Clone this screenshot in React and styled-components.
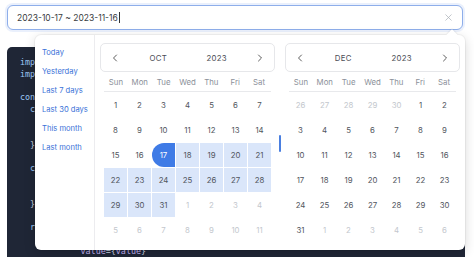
import React from 'react'
import styled, { createGlobalStyle } from 'styled-components'
import { ChevronLeft, ChevronRight, X } from 'lucide-react'

// STYLES //
const Global = createGlobalStyle`
  html, body {
    margin: 0;
    padding: 0;
    background: #fff;
    font-family: "Inter", "Liberation Sans", sans-serif;
  }
  * { box-sizing: border-box; }
`;
const Page = styled.div`
  position: relative;
  width: 474px;
  height: 257px;
  overflow: hidden;
  padding: 5px 0 0 7px;
`;
const Input = styled.div`
  display: flex;
  align-items: center;
  width: 456px;
  height: 25px;
  padding: 0 8px 0 9px;
  border: 1px solid #8eaeea;
  border-radius: 6px;
  box-shadow: 0 0 0 2px rgba(80, 130, 230, 0.12);
  font-size: 8.5px;
  color: #3a3d42;
  background: #fff;
`;
const InputText = styled.span`
  flex: 1;
  display: flex;
  align-items: center;
`;
const Caret = styled.span`
  width: 1px;
  height: 11px;
  background: #333;
  margin-left: 1px;
`;
const Clear = styled.span`
  display: flex;
  color: #a8adb5;
`;
const Code = styled.pre`
  margin: 17px 0 0 0;
  width: 458px;
  height: 220px;
  padding: 10px 0 0 13px;
  background: #1f2636;
  border-radius: 5px 5px 0 0;
  font-family: "DejaVu Sans Mono", "Liberation Mono", monospace;
  font-size: 8.4px;
  line-height: 11.8px;
  color: #c9d3e3;
  overflow: hidden;
`;
const Kw = styled.span`
  color: ${p => p.c || '#9cc6f5'};
`;
const Popup = styled.div`
  position: absolute;
  left: 35px;
  top: 35px;
  width: 430px;
  height: 215px;
  display: flex;
  background: #fff;
  border-radius: 6px;
  box-shadow: 0 3px 12px rgba(0, 0, 0, 0.16), 0 0 0 1px rgba(0, 0, 0, 0.04);
`;
const Arrow = styled.div`
  position: absolute;
  top: -4px;
  right: 9px;
  width: 8px;
  height: 8px;
  background: #fff;
  transform: rotate(45deg);
  box-shadow: -1px -1px 1px rgba(0, 0, 0, 0.06);
`;
const Sidebar = styled.div`
  width: 60px;
  padding: 8px 0 0 7px;
  border-right: 1px solid #ececef;
  display: flex;
  flex-direction: column;
`;
const Preset = styled.div`
  height: 19px;
  line-height: 19px;
  font-size: 7.6px;
  color: #3a72d8;
  white-space: nowrap;
`;
const Calendars = styled.div`
  position: relative;
  display: flex;
  gap: 10px;
  padding: 8px 5px 7px 5px;
`;
const RangeBar = styled.div`
  position: absolute;
  left: 184px;
  top: 100px;
  width: 2px;
  height: 17px;
  background: #4a7fe0;
  border-radius: 1px;
`;
const Calendar = styled.div`
  width: 175px;
  display: flex;
  flex-direction: column;
`;
const Header = styled.div`
  height: 29px;
  display: grid;
  grid-template-columns: 28px 1fr 1fr 28px;
  align-items: center;
  justify-items: center;
  border: 1px solid #e6e7ea;
  border-radius: 5px;
  font-size: 7.8px;
  color: #4a4e55;
  letter-spacing: 0.3px;
`;
const Nav = styled.span`
  display: flex;
  color: #333;
`;
const Body = styled.div`
  padding: 0 4px;
`;
const Weekdays = styled.div`
  display: grid;
  grid-template-columns: repeat(7, 1fr);
  height: 20px;
  align-items: center;
  justify-items: center;
  border-bottom: 1px solid #e8e9ec;
  font-size: 7.8px;
  color: #8b9099;
`;
const Days = styled.div`
  margin-top: 1px;
  display: grid;
  grid-template-columns: repeat(7, 1fr);
  grid-auto-rows: 24px;
  gap: 1px;
`;
const Day = styled.div`
  display: flex;
  align-items: center;
  justify-content: center;
  font-size: 7.8px;
  color: ${p => (p.$start ? '#fff' : p.$muted ? '#c3c7cd' : '#50555d')};
  background: ${p => (p.$start ? '#3f7be6' : p.$range ? '#dae6fa' : 'transparent')};
  border-radius: ${p => (p.$start ? '12px 0 0 12px' : '0')};
`;

// DATA //
const presets = ['Today', 'Yesterday', 'Last 7 days', 'Last 30 days', 'This month', 'Last month'];
const weekdays = ['Sun', 'Mon', 'Tue', 'Wed', 'Thu', 'Fri', 'Sat'];

const octDays = [
  ...Array.from({ length: 31 }, (_, i) => ({
    n: i + 1,
    range: i + 1 >= 17,
    start: i + 1 === 17,
  })),
  ...Array.from({ length: 11 }, (_, i) => ({ n: i + 1, muted: true })),
];
const decDays = [
  ...[26, 27, 28, 29, 30].map(n => ({ n, muted: true })),
  ...Array.from({ length: 31 }, (_, i) => ({ n: i + 1 })),
  ...Array.from({ length: 6 }, (_, i) => ({ n: i + 1, muted: true })),
];

const Month = ({ month, year, days }) => (
  <Calendar>
    <Header>
      <Nav><ChevronLeft size={12} strokeWidth={1.6} /></Nav>
      <span>{month}</span>
      <span>{year}</span>
      <Nav><ChevronRight size={12} strokeWidth={1.6} /></Nav>
    </Header>
    <Body>
      <Weekdays>
        {weekdays.map(w => <span key={w}>{w}</span>)}
      </Weekdays>
      <Days>
        {days.map((d, i) => (
          <Day key={i} $muted={d.muted} $range={d.range} $start={d.start}>{d.n}</Day>
        ))}
      </Days>
    </Body>
  </Calendar>
);

// COMPONENT //
const App = () => {
  return (
    <Page>
      <Global />
      <Input>
        <InputText>2023-10-17 ~ 2023-11-16<Caret /></InputText>
        <Clear><X size={11} strokeWidth={1.5} /></Clear>
      </Input>
      <Code>
        <Kw>import</Kw> React{'\n'}
        <Kw>import</Kw> {'{'}{'\n'}
        {'\n'}
        <Kw>const</Kw> App{'\n'}
        {'  '}<Kw>c</Kw>{'\n'}
        {'\n'}
        {'\n'}
        {'  '}{'}'}{'\n'}
        {'\n'}
        {'  '}<Kw>c</Kw>{'\n'}
        {'\n'}
        {'\n'}
        {'  '}{'}'}{'\n'}
        {'\n'}
        {'  '}<Kw>r</Kw>{'\n'}
        {'\n'}
        {'            '}<Kw c="#c3b2f5">value</Kw>={'{'}<Kw c="#c3b2f5">value</Kw>{'}'}{'\n'}
      </Code>
      <Popup>
        <Arrow />
        <Sidebar>
          {presets.map(p => <Preset key={p}>{p}</Preset>)}
        </Sidebar>
        <Calendars>
          <Month month="OCT" year="2023" days={octDays} />
          <Month month="DEC" year="2023" days={decDays} />
          <RangeBar />
        </Calendars>
      </Popup>
    </Page>
  );
};

export default App;
